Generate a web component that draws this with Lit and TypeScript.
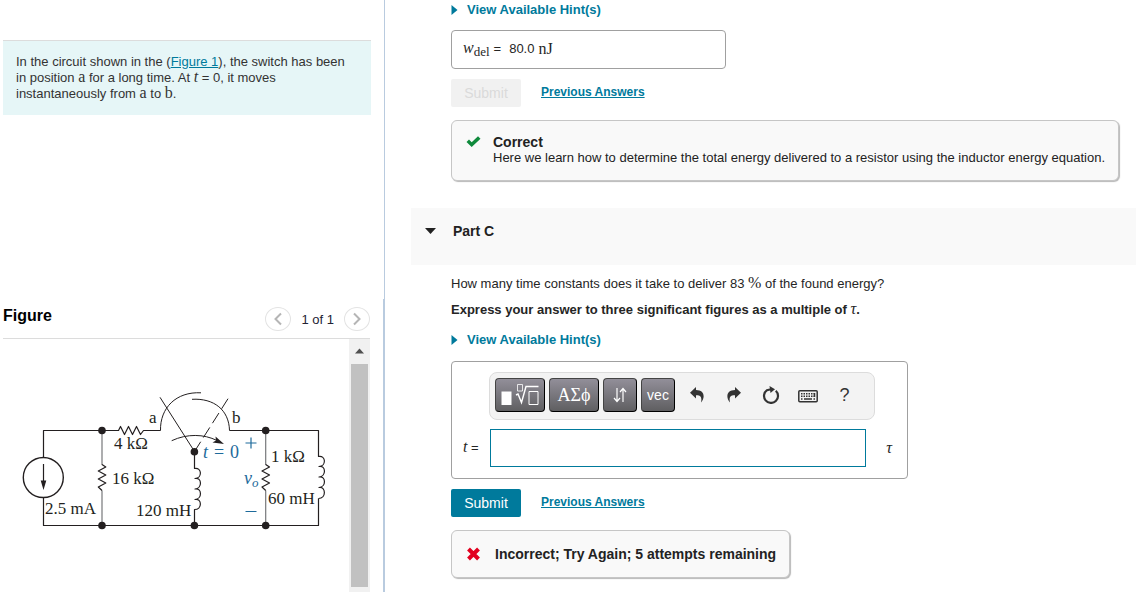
import { LitElement, html, svg, css } from "lit";
import { customElement } from "lit/decorators.js";

@customElement("circuit-diagram")
class CircuitDiagram extends LitElement {
  static styles = css`
    :host { display: block; }
    .drawing { display: block; }
    .wire { fill: none; stroke: #231f20; stroke-width: 1.2; stroke-linejoin: round; }
    .thin { stroke-width: 1; }
    .soft { fill: none; stroke: #77787b; stroke-width: 1.2; }
    .ring { fill: none; stroke: #231f20; stroke-width: 1.4; }
    .node { fill: #231f20; }
    .label { font-family: "Liberation Serif", serif; font-size: 17px; fill: #231f20; }
    .blue { fill: #1d6a9b; }
    .big { font-size: 18px; }
    .sub { font-size: 13px; }
    .it { font-style: italic; }
    .sign { stroke: #1d6a9b; stroke-width: 1.2; fill: none; }
  `;

  private node(x: number, y: number) {
    return svg`<circle class="node" cx=${x} cy=${y} r="3.8"></circle>`;
  }

  render() {
    return html`
      <svg class="drawing" width="349" height="245" viewBox="0 339 349 245" role="img" aria-label="Circuit diagram">
        <path class="wire" d="M43.5 457.5V430.5H118.5L120.5 426.5L124.5 434.5L128.5 426.5L132.5 434.5L136.5 426.5L140.5 434.5L143.5 430.5H160.5" />
        <path class="wire" d="M43.5 497.5V525.5H318.5V498.5" />
        <circle class="ring" cx="43.3" cy="477.5" r="20" />
        <path class="wire" d="M43.5 464V483" />
        <path class="node" d="M40.7 480.5H46.3L43.5 490Z" />
        <path class="soft" d="M102 430V465M102 490.5V525M265.7 430V465M265.7 490.5V525" />
        <path class="wire" d="M102 464.5L105.8 467L98.3 471L105.8 475L98.3 479L105.8 483L98.3 487L102 490.5" />
        <path class="wire" d="M265.7 464.5L269.5 467L262 471L269.5 475L262 479L269.5 483L262 487L265.7 490.5" />
        <path class="wire" d="M229.5 430.5H318.5V456.5C326 455 326.5 466 319 466.5C326 465 326.5 476.5 319 477C326 475.5 326.5 487 319 487.5C326 486 326.5 498.5 318.5 498.5" />
        <path class="wire" d="M194.5 451.5V468.5C202 467 202.5 478 195 478.5C202 477 202.5 488.5 195 489C202 487.5 202.5 499 195 499.5C202 498 202.5 509.5 194.5 509.5V525.5" />
        <path class="wire thin" d="M160.5 430.5C160 408 176 391.5 201 392.8M192 399.3C214 398 229 410 229.5 430.5" />
        <path class="wire thin" d="M160 397.3L194.5 451.5" />
        <path class="wire thin" stroke-dasharray="12 5" d="M228 398.7L194.5 451.5" />
        <path class="wire thin" d="M171.7 440.7C187 433.5 204 434 217 440.5" />
        <path class="node" d="M224 444L215.5 436.5L216 440.5L212.5 442.5Z" />
        ${this.node(102, 430.5)}${this.node(102, 525.5)}${this.node(194.4, 451.7)}
        ${this.node(194.4, 525.5)}${this.node(265.7, 430.5)}${this.node(265.7, 525.5)}
        <path class="sign" d="M245.5 443H256.5M251 437.5V448.5M245.5 511.5H256.5" />
        <text class="label" x="149" y="423">a</text>
        <text class="label" x="232" y="423">b</text>
        <text class="label" x="114" y="449">4 kΩ</text>
        <text class="label" x="112" y="484">16 kΩ</text>
        <text class="label" x="45" y="514">2.5 mA</text>
        <text class="label" x="136" y="516">120 mH</text>
        <text class="label" x="271" y="462">1 kΩ</text>
        <text class="label" x="268" y="504">60 mH</text>
        <text class="label blue big" y="458"><tspan class="it" x="203">t</tspan><tspan x="214">=</tspan><tspan x="230">0</tspan></text>
        <text class="label blue big it" x="244" y="484">v<tspan class="sub" x="252" y="487">o</tspan></text>
      </svg>
    `;
  }
}

@customElement("app-root")
class AppRoot extends LitElement {
  static styles = css`
    :host {
      display: block;
      font-family: "Liberation Sans", Arial, sans-serif;
      font-size: 13px;
      line-height: 16px;
      color: #252525;
      background: #fff;
    }
    * { box-sizing: border-box; }
    h2, h3, p { margin: 0; font-size: inherit; }
    button, input { font: inherit; color: inherit; }
    a { color: #007a9c; }
    .page { display: flex; height: 100vh; overflow: hidden; }
    .side {
      flex: none;
      width: clamp(300px, 34%, 385px);
      display: grid;
      grid-template-rows: 299px minmax(0, 1fr);
    }
    .intro { padding: 40px 13px 0 3px; border-right: 1px solid #b9cbdf; }
    .problem { padding: 13px; border-top: 1px solid #dcdcdc; background: #e6f6f7; color: #333; }
    .math { font-family: "Liberation Serif", serif; font-size: 16px; line-height: 0; font-weight: normal; }
    .it { font-style: italic; }
    .figure {
      display: flex;
      flex-direction: column;
      min-height: 0;
      padding: 0 13px 0 3px;
      border-right: 2px solid #b9cbdf;
    }
    .fighead {
      display: flex;
      align-items: center;
      height: 40px;
      border-bottom: 1px solid #dcdcdc;
      flex: none;
    }
    .figtitle { font-size: 16px; color: #000; margin-right: auto; padding-bottom: 6px; }
    .count { margin: 2px 10px 0; color: #223; }
    .round {
      width: 26px; height: 24px; padding: 0; display: grid; place-items: center;
      border: 1px solid #e3e3e3; border-radius: 50%; background: #fff;
    }
    .viewer { display: flex; flex: 1; min-height: 0; }
    .canvas { flex: 1; min-width: 0; overflow: hidden; margin-left: -3px; }
    .track {
      flex: none; width: 21px; display: flex; flex-direction: column; align-items: center;
      gap: 10px; padding: 9px 2px 5px; background: #f1f1f1;
    }
    .thumb { flex: 1; width: 17px; background: #c1c1c1; }
    .main { flex: 1; min-width: 0; padding: 2px 0 0 26px; }
    .block { padding: 0 17px 0 40px; }
    .hint {
      display: flex; align-items: center; gap: 9px; padding: 0; border: 0; background: none;
      color: #007a9c; font-weight: bold;
    }
    .answered {
      display: flex; align-items: center; width: 275px; height: 39px; margin-top: 12px;
      padding: 0 11px 2px; border: 1px solid #a0a0a0; border-radius: 4px; gap: 4px;
    }
    .value { display: flex; align-items: center; gap: 4px; margin-left: 4px; }
    .sub { font-size: 13px; vertical-align: -3px; }
    .actions { display: flex; align-items: center; gap: 20px; margin-top: 10px; }
    .submit {
      width: 70px; height: 28px; padding: 0; border: 0; border-radius: 2px;
      background: #007a9c; color: #fff; font-size: 14px;
    }
    .submit:disabled { background: #f1f1f1; color: #dadada; }
    .previous { font-size: 12px; font-weight: bold; padding-bottom: 3px; }
    .feedback {
      display: flex; gap: 12px; margin-top: 13px; padding: 13px 0 13px 14px; min-height: 61px;
      border: 1px solid #c6c6c6; border-radius: 6px; background: #f9f9f9;
      box-shadow: 1px 1px 1px #b8b8b8; color: #222;
    }
    .strong { font-size: 14px; font-weight: bold; }
    .status { flex: none; margin-top: 1px; }
    .band {
      display: flex; gap: 17px; height: 57px; margin-top: 27px; padding: 15px 14px;
      background: #f9f9f9; color: #222;
    }
    .band .arrow { margin-top: 5px; }
    .question { margin-top: 11px; }
    .ask { margin-top: 10px; font-weight: bold; }
    .again { margin-top: 14px; }
    .entry {
      display: grid; grid-template-columns: 27px minmax(0, 1fr) 20px; column-gap: 0;
      width: 457px; max-width: 100%; margin-top: 13px; padding: 10px 11px 11px;
      border: 1px solid #a0a0a0; border-radius: 4px; align-items: center;
    }
    .tools {
      grid-column: 2 / 4; justify-self: start; display: flex; gap: 4px; align-items: center;
      height: 48px; width: 386px; padding: 0 5px 2px; margin: 0 0 9px -1px;
      border: 1px solid #dcdcdc; border-radius: 8px; background: #f3f3f3;
    }
    .key {
      width: 50px; height: 34px; padding: 0; display: grid; place-items: center;
      border: 1px solid #444; border-right-color: #000; border-bottom-color: #000; border-radius: 4px;
      background: linear-gradient(#928f99, #5f5f61); color: #fff;
    }
    .narrow { width: 34px; }
    .greek { font-family: "Liberation Serif", serif; font-size: 18px; }
    .vec { font-size: 14px; }
    .glyphs { display: flex; gap: 4px; margin-left: 1px; }
    .tool { width: 33px; height: 34px; padding: 0; border: 0; background: none; display: grid; place-items: center; color: #333; }
    .help { font-size: 18px; }
    .field { width: 376px; max-width: 100%; height: 38px; border: 1px solid #007a9c; background: #fff; padding: 0 8px; outline: 0; }
    .unit { text-align: right; padding-right: 4px; }
    .wrong { width: 339px; min-height: 48px; align-items: center; padding: 0 0 0 14px; gap: 14px; max-width: 100%; }
    .wrong .status { margin: 0; }
    .wrong .strong { white-space: nowrap; }
  `;

  private hint() {
    return html`<button class="hint">
      <svg width="7" height="10" viewBox="0 0 7 10"><path d="M.5 0L6.5 5L.5 10Z" fill="#007a9c" /></svg>View Available Hint(s)
    </button>`;
  }

  private chevron(d: string) {
    return html`<svg width="10" height="14" viewBox="0 0 10 14"><path d=${d} fill="none" stroke="#b5b5b5" stroke-width="2" /></svg>`;
  }

  render() {
    return html`
      <div class="page">
        <aside class="side">
          <div class="intro">
            <p class="problem">
              In the circuit shown in the (<a href="#figure">Figure 1</a>), the switch has been in position
              <span class="math">a</span> for a long time. At <span class="math it">t</span> = 0, it moves instantaneously from
              <span class="math">a</span> to <span class="math">b</span>.
            </p>
          </div>
          <section class="figure" id="figure">
            <header class="fighead">
              <h2 class="figtitle">Figure</h2>
              <button class="round" aria-label="Previous figure">${this.chevron("M8 1.5L2.5 7L8 12.5")}</button>
              <span class="count">1 of 1</span>
              <button class="round" aria-label="Next figure">${this.chevron("M2 1.5L7.5 7L2 12.5")}</button>
            </header>
            <div class="viewer">
              <div class="canvas"><circuit-diagram></circuit-diagram></div>
              <div class="track">
                <svg width="9" height="6" viewBox="0 0 9 6"><path d="M0 5.5L4.5 .5L9 5.5Z" fill="#505050" /></svg>
                <div class="thumb"></div>
              </div>
            </div>
          </section>
        </aside>
        <main class="main">
          <div class="block">
            ${this.hint()}
            <div class="answered">
              <span><span class="math it">w</span><span class="math sub">del</span></span>=
              <span class="value">80.0 <span class="math">nJ</span></span>
            </div>
            <div class="actions">
              <button class="submit" disabled>Submit</button>
              <a class="previous" href="#previous-b">Previous Answers</a>
            </div>
            <div class="feedback">
              <svg class="status" width="15" height="14" viewBox="0 0 15 14"><path d="M.5 7L3 4.5L5.7 7.2L12 1.3L14.5 3.7L5.7 12Z" fill="#0f8a3c" /></svg>
              <div>
                <p class="strong">Correct</p>
                <p>Here we learn how to determine the total energy delivered to a resistor using the inductor energy equation.</p>
              </div>
            </div>
          </div>
          <header class="band">
            <svg class="arrow" width="11" height="6" viewBox="0 0 11 6"><path d="M0 0H11L5.5 6Z" fill="#222" /></svg>
            <h3 class="strong">Part C</h3>
          </header>
          <div class="block">
            <p class="question">How many time constants does it take to deliver 83 <span class="math">%</span> of the found energy?</p>
            <p class="ask">Express your answer to three significant figures as a multiple of <span class="math it">τ</span>.</p>
            <div class="again">${this.hint()}</div>
            <div class="entry">
              <div class="tools" role="toolbar">
                <button class="key" aria-label="Templates">
                  <svg width="38" height="22" viewBox="0 0 38 22" fill="none" stroke="#fff">
                    <path d="M.5 7.5H10.5V21H.5Z" fill="#fff" stroke="none" />
                    <path d="M16.5 .5H21.5V7H16.5Z" stroke-width=".8" />
                    <path d="M15 11L17 10L20.5 18.5L25 2.5H37.5" stroke-width="1.4" />
                    <path d="M28 7.5H37V20.5H28Z" />
                  </svg>
                </button>
                <button class="key greek">ΑΣϕ</button>
                <button class="key narrow" aria-label="Subscript and superscript">
                  <svg width="14" height="16" viewBox="0 0 14 16" fill="none" stroke="#fff" stroke-width="1.2">
                    <path d="M4 1V14M1 11L4 14.5L7 11M10 15V2M7 5L10 1.5L13 5" />
                  </svg>
                </button>
                <button class="key narrow vec">vec</button>
                <div class="glyphs">
                  <button class="tool" aria-label="Undo">
                    <svg width="14" height="16" viewBox="0 0 14 16"><path d="M6 0L0 5.8L6 11.5V8.3C10 8 12.3 9.5 11 15.5C15.5 10.5 14.5 3 6 3Z" fill="#333" /></svg>
                  </button>
                  <button class="tool" aria-label="Redo">
                    <svg width="14" height="16" viewBox="0 0 14 16"><path d="M8 0L14 5.8L8 11.5V8.3C4 8 1.7 9.5 3 15.5C-1.5 10.5 -.5 3 8 3Z" fill="#333" /></svg>
                  </button>
                  <button class="tool" aria-label="Reset">
                    <svg width="18" height="18" viewBox="0 0 18 18"><path d="M13.8 4.8A7 7 0 1 1 5 4.2L10 3" fill="none" stroke="#333" stroke-width="2.2" /><path d="M7.5 0L13 3.2L8.5 7Z" fill="#333" /></svg>
                  </button>
                  <button class="tool" aria-label="Keyboard shortcuts">
                    <svg width="20" height="16" viewBox="0 0 20 16" fill="none" stroke="#333">
                      <rect x=".8" y="3.8" width="18.4" height="11" rx="1" stroke-width="1.5" />
                      <path d="M3 6.7H17M3 9.2H17" stroke-dasharray="1.5 1" stroke-width="1.5" /><path d="M3 12H4.5M6 12H14M15.5 12H17M16.5 6V10" stroke-width="1.5" />
                    </svg>
                  </button>
                  <button class="tool help" aria-label="Help">?</button>
                </div>
              </div>
              <label for="answer"><span class="math it">t</span> =</label>
              <input class="field" id="answer" type="text" />
              <span class="math it unit">τ</span>
            </div>
            <div class="actions">
              <button class="submit">Submit</button>
              <a class="previous" href="#previous-c">Previous Answers</a>
            </div>
            <div class="feedback wrong">
              <svg class="status" width="15" height="14" viewBox="0 0 15 14"><path d="M2.5 2L12.5 12M12.5 2L2.5 12" stroke="#e2001f" stroke-width="4" /></svg>
              <p class="strong">Incorrect; Try Again; 5 attempts remaining</p>
            </div>
          </div>
        </main>
      </div>
    `;
  }
}
